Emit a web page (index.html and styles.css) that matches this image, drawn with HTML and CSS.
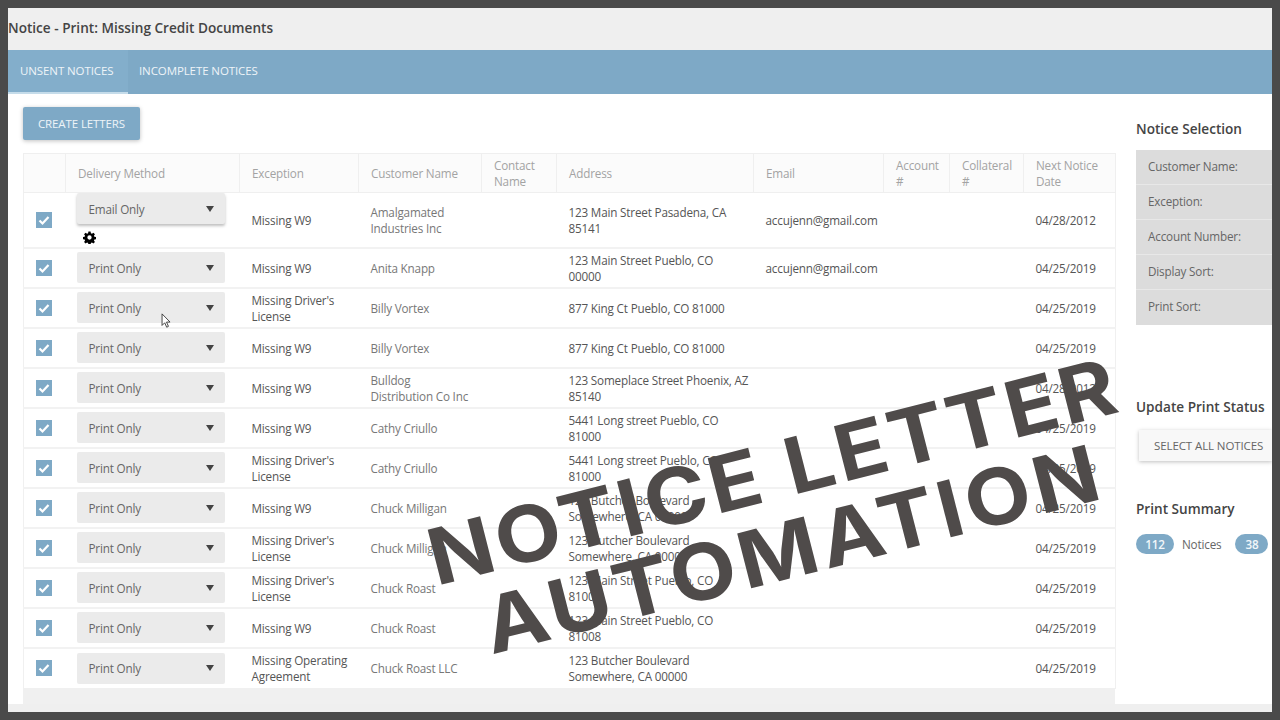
FILE: index.html
```html
<!DOCTYPE html>
<html lang="en">
<head>
    <meta charset="UTF-8">
    <title>Notice - Print: Missing Credit Documents</title>
    <link rel="stylesheet" href="styles.css">
</head>
<body>
    <div class="app">
        <div class="title-bar">Notice - Print: Missing Credit Documents</div>
        <div class="tabs">
            <div class="tab active">UNSENT NOTICES</div>
            <div class="tab">INCOMPLETE NOTICES</div>
        </div>
        <div class="content">
            <div class="main">
                <button class="create-btn">CREATE LETTERS</button>
                <table class="notices">
                    <colgroup>
                        <col class="c-check"><col class="c-method"><col class="c-exception"><col class="c-customer"><col class="c-contact"><col class="c-address"><col class="c-email"><col class="c-account"><col class="c-collateral"><col class="c-date">
                    </colgroup>
                    <thead>
                        <tr>
                            <th></th>
                            <th>Delivery Method</th>
                            <th>Exception</th>
                            <th>Customer Name</th>
                            <th>Contact<br>Name</th>
                            <th>Address</th>
                            <th>Email</th>
                            <th>Account<br>#</th>
                            <th>Collateral<br>#</th>
                            <th>Next Notice<br>Date</th>
                        </tr>
                    </thead>
                    <tbody>
                        <tr class="first">
                            <td><span class="check"><svg viewBox="0 0 16 16"><path d="M3.5 8.5l3 3 6-6.5"/></svg></span></td>
                            <td class="method-cell">
                                <div class="select raised"><span>Email Only</span><i class="caret"></i></div>
                                <svg class="gear" viewBox="0 0 24 24"><path d="M10 1h4l.6 3.2 1.9.8 2.7-1.8 2.8 2.8-1.8 2.7.8 1.9 3 .6v4l-3 .6-.8 1.9 1.8 2.7-2.8 2.8-2.7-1.8-1.9.8-.6 3.2h-4l-.6-3.2-1.9-.8-2.7 1.8-2.8-2.8 1.8-2.7-.8-1.9-3-.6v-4l3-.6.8-1.9-1.8-2.7 2.8-2.8 2.7 1.8 1.9-.8zM12 8a4 4 0 1 0 0 8 4 4 0 0 0 0-8z" fill-rule="evenodd"/></svg>
                            </td>
                            <td>Missing W9</td>
                            <td class="name">Amalgamated<br>Industries Inc</td>
                            <td></td>
                            <td>123 Main Street Pasadena, CA<br>85141</td>
                            <td>accujenn@gmail.com</td>
                            <td></td>
                            <td></td>
                            <td>04/28/2012</td>
                        </tr>
                        <tr>
                            <td><span class="check"><svg viewBox="0 0 16 16"><path d="M3.5 8.5l3 3 6-6.5"/></svg></span></td>
                            <td><div class="select"><span>Print Only</span><i class="caret"></i></div></td>
                            <td>Missing W9</td>
                            <td class="name">Anita Knapp</td>
                            <td></td>
                            <td>123 Main Street Pueblo, CO<br>00000</td>
                            <td>accujenn@gmail.com</td>
                            <td></td>
                            <td></td>
                            <td>04/25/2019</td>
                        </tr>
                        <tr>
                            <td><span class="check"><svg viewBox="0 0 16 16"><path d="M3.5 8.5l3 3 6-6.5"/></svg></span></td>
                            <td><div class="select"><span>Print Only</span><i class="caret"></i></div></td>
                            <td>Missing Driver's<br>License</td>
                            <td class="name">Billy Vortex</td>
                            <td></td>
                            <td>877 King Ct Pueblo, CO 81000</td>
                            <td></td>
                            <td></td>
                            <td></td>
                            <td>04/25/2019</td>
                        </tr>
                        <tr>
                            <td><span class="check"><svg viewBox="0 0 16 16"><path d="M3.5 8.5l3 3 6-6.5"/></svg></span></td>
                            <td><div class="select"><span>Print Only</span><i class="caret"></i></div></td>
                            <td>Missing W9</td>
                            <td class="name">Billy Vortex</td>
                            <td></td>
                            <td>877 King Ct Pueblo, CO 81000</td>
                            <td></td>
                            <td></td>
                            <td></td>
                            <td>04/25/2019</td>
                        </tr>
                        <tr>
                            <td><span class="check"><svg viewBox="0 0 16 16"><path d="M3.5 8.5l3 3 6-6.5"/></svg></span></td>
                            <td><div class="select"><span>Print Only</span><i class="caret"></i></div></td>
                            <td>Missing W9</td>
                            <td class="name">Bulldog<br>Distribution Co Inc</td>
                            <td></td>
                            <td>123 Someplace Street Phoenix, AZ<br>85140</td>
                            <td></td>
                            <td></td>
                            <td></td>
                            <td>04/28/2012</td>
                        </tr>
                        <tr>
                            <td><span class="check"><svg viewBox="0 0 16 16"><path d="M3.5 8.5l3 3 6-6.5"/></svg></span></td>
                            <td><div class="select"><span>Print Only</span><i class="caret"></i></div></td>
                            <td>Missing W9</td>
                            <td class="name">Cathy Criullo</td>
                            <td></td>
                            <td>5441 Long street Pueblo, CO<br>81000</td>
                            <td></td>
                            <td></td>
                            <td></td>
                            <td>04/25/2019</td>
                        </tr>
                        <tr>
                            <td><span class="check"><svg viewBox="0 0 16 16"><path d="M3.5 8.5l3 3 6-6.5"/></svg></span></td>
                            <td><div class="select"><span>Print Only</span><i class="caret"></i></div></td>
                            <td>Missing Driver's<br>License</td>
                            <td class="name">Cathy Criullo</td>
                            <td></td>
                            <td>5441 Long street Pueblo, CO<br>81000</td>
                            <td></td>
                            <td></td>
                            <td></td>
                            <td>04/25/2019</td>
                        </tr>
                        <tr>
                            <td><span class="check"><svg viewBox="0 0 16 16"><path d="M3.5 8.5l3 3 6-6.5"/></svg></span></td>
                            <td><div class="select"><span>Print Only</span><i class="caret"></i></div></td>
                            <td>Missing W9</td>
                            <td class="name">Chuck Milligan</td>
                            <td></td>
                            <td>123 Butcher Boulevard<br>Somewhere, CA 00000</td>
                            <td></td>
                            <td></td>
                            <td></td>
                            <td>04/25/2019</td>
                        </tr>
                        <tr>
                            <td><span class="check"><svg viewBox="0 0 16 16"><path d="M3.5 8.5l3 3 6-6.5"/></svg></span></td>
                            <td><div class="select"><span>Print Only</span><i class="caret"></i></div></td>
                            <td>Missing Driver's<br>License</td>
                            <td class="name">Chuck Milligan</td>
                            <td></td>
                            <td>123 Butcher Boulevard<br>Somewhere, CA 00000</td>
                            <td></td>
                            <td></td>
                            <td></td>
                            <td>04/25/2019</td>
                        </tr>
                        <tr>
                            <td><span class="check"><svg viewBox="0 0 16 16"><path d="M3.5 8.5l3 3 6-6.5"/></svg></span></td>
                            <td><div class="select"><span>Print Only</span><i class="caret"></i></div></td>
                            <td>Missing Driver's<br>License</td>
                            <td class="name">Chuck Roast</td>
                            <td></td>
                            <td>123 Main Street Pueblo, CO<br>81008</td>
                            <td></td>
                            <td></td>
                            <td></td>
                            <td>04/25/2019</td>
                        </tr>
                        <tr>
                            <td><span class="check"><svg viewBox="0 0 16 16"><path d="M3.5 8.5l3 3 6-6.5"/></svg></span></td>
                            <td><div class="select"><span>Print Only</span><i class="caret"></i></div></td>
                            <td>Missing W9</td>
                            <td class="name">Chuck Roast</td>
                            <td></td>
                            <td>123 Main Street Pueblo, CO<br>81008</td>
                            <td></td>
                            <td></td>
                            <td></td>
                            <td>04/25/2019</td>
                        </tr>
                        <tr class="last">
                            <td><span class="check"><svg viewBox="0 0 16 16"><path d="M3.5 8.5l3 3 6-6.5"/></svg></span></td>
                            <td><div class="select"><span>Print Only</span><i class="caret"></i></div></td>
                            <td>Missing Operating<br>Agreement</td>
                            <td class="name">Chuck Roast LLC</td>
                            <td></td>
                            <td>123 Butcher Boulevard<br>Somewhere, CA 00000</td>
                            <td></td>
                            <td></td>
                            <td></td>
                            <td>04/25/2019</td>
                        </tr>
                    </tbody>
                </table>
                <div class="table-foot"></div>
            </div>
            <div class="side">
                <h3 class="side-title">Notice Selection</h3>
                <div class="selection">
                    <div class="selection-row">Customer Name:</div>
                    <div class="selection-row">Exception:</div>
                    <div class="selection-row">Account Number:</div>
                    <div class="selection-row">Display Sort:</div>
                    <div class="selection-row">Print Sort:</div>
                </div>
                <h3 class="side-title status-title">Update Print Status</h3>
                <button class="select-all">SELECT ALL NOTICES</button>
                <h3 class="side-title summary-title">Print Summary</h3>
                <div class="summary">
                    <span class="pill">112</span>
                    <span class="summary-label">Notices</span>
                    <span class="pill small">38</span>
                </div>
            </div>
        </div>
        <div class="page-foot"></div>

        <!-- mouse pointer from the recording -->
        <svg class="pointer" viewBox="0 0 12 18"><path d="M1 1v13l3-3 2.2 5 2-1-2.2-4.800h4z"/></svg>
        <!-- video title stamped over the page -->
        <div class="stamp">
            <div class="stamp-top">NOTICE LETTER</div>
            <div class="stamp-bottom">AUTOMATION</div>
        </div>
    </div>
</body>
</html>
```
FILE: styles.css
```css
* {
    box-sizing: border-box;
}

html, body {
    margin: 0;
    height: 100%;
}

body {
    background: #4a4a4a;
    padding: 8px;
    font-family: "Open Sans", "Noto Sans", sans-serif;
    font-size: 11.700px;
    letter-spacing: -0.18px;
    color: #555;
    overflow: hidden;
}

.app {
    position: relative;
    width: 1264px;
    height: 704px;
    background: #fff;
    overflow: hidden;
    display: flex;
    flex-direction: column;
}

.title-bar {
    height: 42px;
    flex: none;
    background: #efefef;
    font-size: 13.600px;
    font-weight: 600;
    letter-spacing: 0;
    color: #444;
    line-height: 40px;
}

.tabs {
    height: 44px;
    flex: none;
    display: flex;
    background: #7ea9c6;
    color: #fff;
}

.tab {
    padding: 0 11px;
    line-height: 42px;
    font-size: 11.500px;
    letter-spacing: -0.1px;
    color: #eef4f8;
}

.tab.active {
    width: 120px;
    padding-left: 12px;
    background: #83aecb;
    border-bottom: 2px solid #c5dcea;
}

.content {
    flex: 1;
    display: flex;
    min-height: 0;
}

.main {
    width: 1128px;
    flex: none;
    padding: 13px 0 0 15px;
}

.create-btn {
    display: block;
    width: 117px;
    height: 33px;
    border: none;
    border-radius: 2px;
    background: #7ea9c6;
    color: #eef4f8;
    font-family: inherit;
    font-size: 11.500px;
    letter-spacing: -0.1px;
    box-shadow: 0 1px 4px rgba(0,0,0,0.25);
    margin-bottom: 13px;
}

.notices {
    width: 1092px;
    table-layout: fixed;
    border-collapse: collapse;
    border: 1px solid #f0f0f0;
}

.c-check { width: 42px; }
.c-method { width: 174px; }
.c-exception { width: 119px; }
.c-customer { width: 123px; }
.c-contact { width: 75px; }
.c-address { width: 197px; }
.c-email { width: 130px; }
.c-account { width: 66px; }
.c-collateral { width: 74px; }
.c-date { width: 92px; }

.notices th {
    height: 39px;
    padding: 0 2px 0 12px;
    background: #fbfbfb;
    border: 1px solid #efefef;
    font-weight: 400;
    text-align: left;
    line-height: 16px;
    color: #a3a3a3;
}

.notices td {
    height: 40px;
    padding: 0 2px 0 12px;
    line-height: 16px;
    border-bottom: 2px solid #f2f2f2;
    vertical-align: middle;
}

.notices td.name {
    color: #777;
}

.notices tr.first td {
    height: 55px;
}

.notices tr.last td {
    height: 41px;
    border-bottom: none;
}

.check {
    display: block;
    width: 16px;
    height: 16px;
    background: #7ea9c6;
}

.check svg {
    display: block;
    width: 16px;
    height: 16px;
    fill: none;
    stroke: #fff;
    stroke-width: 2.200px;
}

.select {
    width: 148px;
    height: 31px;
    margin-left: -1px;
    display: flex;
    align-items: center;
    justify-content: space-between;
    padding: 0 11px 0 12px;
    background: #ebebeb;
    border-radius: 2px;
    color: #666;
}

.select.raised {
    box-shadow: 0 2px 3px rgba(0,0,0,0.25);
}

.notices td.method-cell {
    vertical-align: top;
}

.caret {
    display: block;
    width: 0;
    height: 0;
    border-left: 4px solid transparent;
    border-right: 4px solid transparent;
    border-top: 6px solid #444;
}

.gear {
    display: block;
    width: 13px;
    height: 13px;
    margin-top: 7px;
    margin-left: 5px;
    fill: #000;
}

.table-foot {
    width: 1092px;
    height: 15px;
    background: #f0f0f0;
}

.side {
    flex: 1;
    padding-top: 26px;
    min-width: 0;
}

.side-title {
    margin: 0;
    font-size: 13.600px;
    font-weight: 600;
    letter-spacing: 0;
    line-height: 18px;
    color: #444;
}

.selection {
    margin-top: 12px;
    background: #dcdcdc;
}

.selection-row {
    height: 35px;
    padding-left: 12px;
    line-height: 33px;
    color: #666;
    border-bottom: 1px solid #e8e8e8;
}

.selection-row:last-child {
    border-bottom: none;
}

.status-title {
    margin-top: 73px;
}

.select-all {
    display: block;
    width: 133px;
    height: 31px;
    margin: 14px 0 0 3px;
    padding: 0 0 0 15px;
    border: none;
    background: #f8f8f8;
    box-shadow: 0 1px 4px rgba(0,0,0,0.25);
    font-family: inherit;
    font-size: 11.500px;
    letter-spacing: -0.1px;
    color: #666;
    text-align: left;
    white-space: nowrap;
}

.summary-title {
    margin-top: 39px;
}

.summary {
    margin-top: 16px;
    display: flex;
    align-items: center;
}

.pill {
    width: 38px;
    height: 20px;
    border-radius: 10px;
    background: #7ea9c6;
    color: #f2f7fa;
    font-weight: 600;
    text-align: center;
    line-height: 20px;
}

.pill.small {
    width: 33px;
}

.summary-label {
    margin: 0 14px 0 8px;
    color: #666;
}

.page-foot {
    height: 8px;
    flex: none;
    background: #efefef;
}

.pointer {
    position: absolute;
    left: 153px;
    top: 305px;
    width: 11px;
    height: 16px;
    fill: #fff;
    stroke: #333;
    stroke-width: 1;
}

.stamp {
    position: absolute;
    left: 425px;
    top: 422px;
    width: 700px;
    transform: rotate(-14.300deg) scaleX(1.100);
    font-family: Inter, "Liberation Sans", sans-serif;
    font-size: 78px;
    font-weight: 700;
    line-height: 79px;
    text-align: center;
    color: #4f4b4a;
    white-space: nowrap;
}

.stamp-top {
    letter-spacing: 2.800px;
}

.stamp-bottom {
    margin-top: 1px;
    letter-spacing: 3.700px;
}
```
